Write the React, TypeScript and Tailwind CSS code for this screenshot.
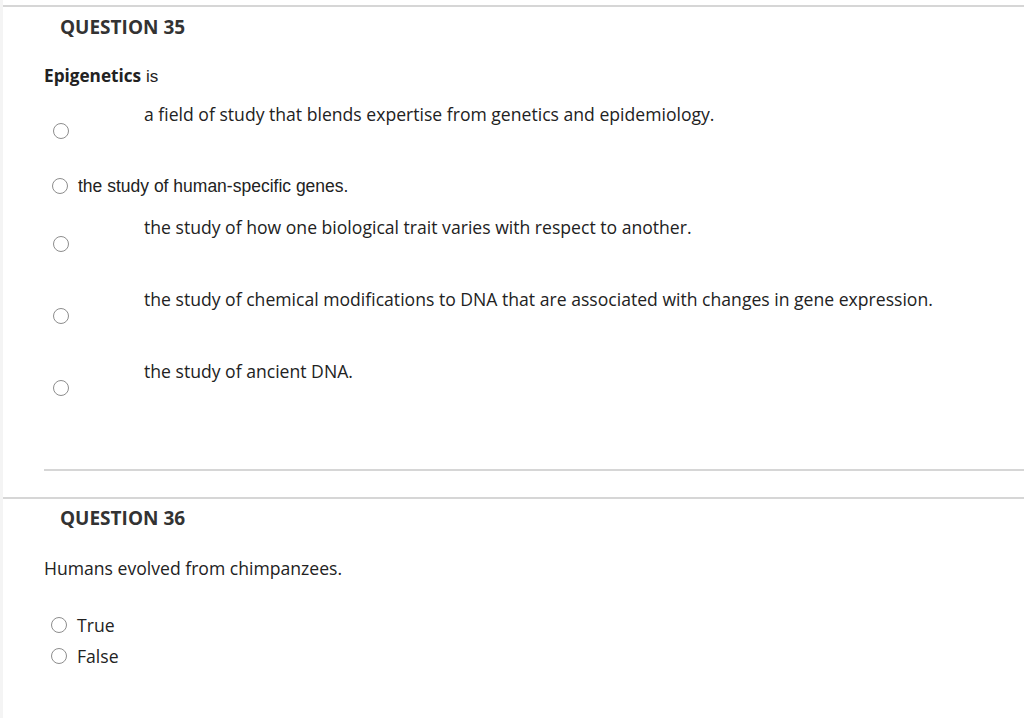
const open = "font-['Open_Sans',sans-serif]";
const arial = "font-['Liberation_Sans',Arial,sans-serif]";

function Radio() {
  return <span className="block w-[16px] h-[16px] rounded-full border border-[#8d8d8d] bg-white" />;
}

function Option({ text }: { text: string }) {
  return (
    <div className="flex items-start h-[72px]">
      <div className="w-[100px] pl-[9px] pt-[20px]">
        <Radio />
      </div>
      <div className={`${open} text-[17.6px] leading-[22px] text-[#222]`}>{text}</div>
    </div>
  );
}

export default function App() {
  return (
    <div className="min-h-[718px] bg-white border-l-[3px] border-[#f4f4f4]">
      <div className="pt-[5px]">
        <div className="h-[2px] bg-[#d6d6d6]" />
      </div>
      <div className="pl-[41px]">
        <h2 className={`${open} font-bold text-[19px] leading-[24px] text-[#333] pl-[16px] pt-[8px]`}>QUESTION 35</h2>
        <p className="mt-[26px] text-[#222] leading-[22px]">
          <span className={`${open} font-bold text-[17.2px]`}>Epigenetics</span>
          <span className={`${arial} text-[17px]`}> is</span>
        </p>
        <div className="mt-[15px]">
          <Option text="a field of study that blends expertise from genetics and epidemiology." />
          <div className="flex items-start h-[41px]">
            <div className="w-[34px] pl-[8px] pt-[3px]">
              <Radio />
            </div>
            <div className={`${arial} text-[17.5px] leading-[22px] text-[#222]`}>the study of human-specific genes.</div>
          </div>
          <Option text="the study of how one biological trait varies with respect to another." />
          <Option text="the study of chemical modifications to DNA that are associated with changes in gene expression." />
          <Option text="the study of ancient DNA." />
        </div>
        <div className="mt-[37px] h-[2px] bg-[#d6d6d6]" />
      </div>
      <div className="mt-[26px] h-[2px] bg-[#d6d6d6]" />
      <div className="pl-[41px]">
        <h2 className={`${open} font-bold text-[19px] leading-[24px] text-[#333] pl-[16px] pt-[7px]`}>QUESTION 36</h2>
        <p className={`${open} text-[17.6px] leading-[22px] text-[#222] mt-[27px]`}>Humans evolved from chimpanzees.</p>
        <div className="mt-[35px] flex flex-col gap-[9px]">
          <div className="flex items-center h-[22px]">
            <div className="w-[33px] pl-[7px]"><Radio /></div>
            <span className={`${open} text-[17.6px] text-[#222]`}>True</span>
          </div>
          <div className="flex items-center h-[22px]">
            <div className="w-[33px] pl-[7px]"><Radio /></div>
            <span className={`${open} text-[17.6px] text-[#222]`}>False</span>
          </div>
        </div>
      </div>
    </div>
  );
}
